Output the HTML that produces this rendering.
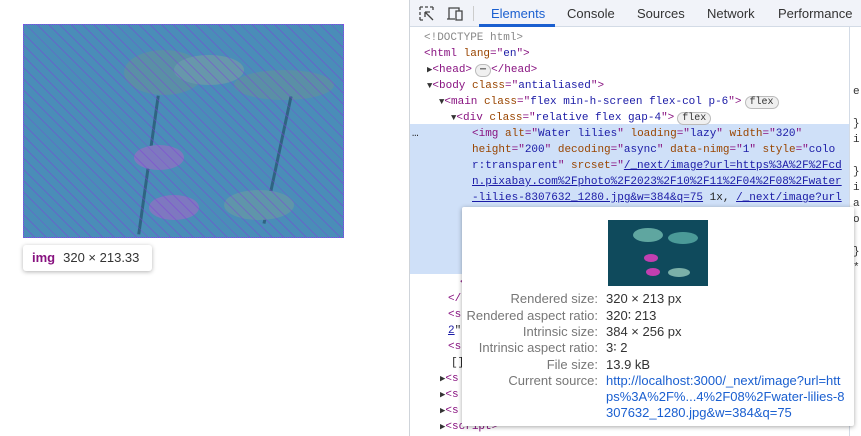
<!DOCTYPE html>
<html><head><style>
*{margin:0;padding:0;box-sizing:border-box}
body{width:861px;height:436px;overflow:hidden;background:#fff;font-family:"Liberation Sans",sans-serif;position:relative}
.img{position:absolute;left:23px;top:24px;width:321px;height:214px;background:#4a8db8;border:1px dotted #8a3ff0;overflow:hidden}
.stripes{position:absolute;inset:0;background:repeating-linear-gradient(45deg,transparent 0 7px,rgba(130,60,220,.45) 7px 8px)}
.tip{position:absolute;left:23px;top:245px;width:129px;height:26px;background:#fff;border-radius:3px;box-shadow:0 1px 4px rgba(0,0,0,.3);font-size:13px;line-height:26px;padding-left:9px;color:#333}
.tip b{color:#881280;margin-right:8px}
.dt{position:absolute;left:409px;top:0;width:452px;height:436px;border-left:1px solid #cfd4da;background:#fff;overflow:hidden}
.bar{height:27px;background:#f1f3f9;border-bottom:1px solid #d3dbe6;position:relative;font-size:13px;color:#333}
.bar span{position:absolute;top:6px}
.code{position:absolute;top:30px;left:0;width:440px;font-family:"Liberation Mono",monospace;font-size:11px;line-height:16px;color:#222}
.l{height:16px;white-space:pre;position:relative;overflow:hidden}
.t{color:#881280}.a{color:#994500}.v{color:#1a1aa6}.g{color:#888}.u{color:#1a1aa6;text-decoration:underline}
.hl{position:absolute;left:0;top:124px;width:440px;height:150px;background:#cfe0f8}
.badge{display:inline-block;border:1px solid #bbb;border-radius:8px;font-size:10px;line-height:11px;padding:0 4px;background:#f0f0f0;color:#333;margin-left:3px}
.side{position:absolute;left:439px;top:27px;width:13px;height:409px;border-left:1px solid #d3dbe6;font-family:"Liberation Mono",monospace;font-size:11px;color:#333;background:#fff}
.pop{position:absolute;left:462px;top:207px;width:392px;height:219px;background:#fff;box-shadow:0 1px 5px rgba(0,0,0,.35);border-radius:2px;font-size:13px;color:#333}
.pop .k{position:absolute;right:256px;text-align:right;color:#777;white-space:nowrap}
.pop .val{position:absolute;left:144px;white-space:nowrap}
.tri{font-size:9px;color:#333}
</style></head><body>
<div class="img">
<div style="position:absolute;left:100px;top:25px;width:80px;height:45px;border-radius:50%;background:#5a8fa6"></div>
<div style="position:absolute;left:150px;top:30px;width:70px;height:30px;border-radius:50%;background:#6797ab"></div>
<div style="position:absolute;left:210px;top:45px;width:100px;height:30px;border-radius:50%;background:#5a8fa6"></div>
<div style="position:absolute;left:123px;top:70px;width:3px;height:140px;background:#2f6482;transform:rotate(8deg)"></div>
<div style="position:absolute;left:252px;top:70px;width:3px;height:130px;background:#2f6482;transform:rotate(12deg)"></div>
<div style="position:absolute;left:110px;top:120px;width:50px;height:25px;border-radius:50%;background:#7e78c0"></div>
<div style="position:absolute;left:125px;top:170px;width:50px;height:25px;border-radius:50%;background:#7e78c0"></div>
<div style="position:absolute;left:200px;top:165px;width:70px;height:30px;border-radius:50%;background:#5f95aa"></div>
<div class="stripes"></div></div>
<div class="tip"><b>img</b>320 × 213.33</div>
<div class="dt">
<div class="bar">
<svg style="position:absolute;left:9px;top:6px" width="16" height="16" fill="none" stroke="#444" stroke-width="1.3"><path d="M1 1h3M6 1h3M11 1h3M1 1v3M1 6v3M1 11v3M1 14h3M14 1v3M6 6l8 8M6 6h5M6 6v5" /></svg>
<svg style="position:absolute;left:36px;top:6px" width="18" height="16" fill="none" stroke="#444" stroke-width="1.3"><path d="M3 13V2h10v3M1 13h8M10 5h6v9h-6z"/></svg>
<div style="position:absolute;left:63px;top:6px;width:1px;height:15px;background:#ccc"></div>
<span style="left:81px;color:#1a5fd0">Elements</span>
<div style="position:absolute;left:69px;top:24px;width:76px;height:3px;background:#1a5fd0"></div>
<span style="left:157px">Console</span>
<span style="left:227px">Sources</span>
<span style="left:297px">Network</span>
<span style="left:368px">Performance</span>
</div>
<div class="hl"></div>
<div class="code">
<div class="l" style="padding-left:14px"><span class="g">&lt;!DOCTYPE html&gt;</span></div>
<div class="l" style="padding-left:14px"><span class="t">&lt;html</span> <span class="a">lang</span><span class="t">="</span><span class="v">en</span><span class="t">"&gt;</span></div>
<div class="l" style="padding-left:17px"><span class="tri">▶</span><span class="t">&lt;head&gt;</span><span class="badge">⋯</span><span class="t">&lt;/head&gt;</span></div>
<div class="l" style="padding-left:17px"><span class="tri">▼</span><span class="t">&lt;body</span> <span class="a">class</span><span class="t">="</span><span class="v">antialiased</span><span class="t">"&gt;</span></div>
<div class="l" style="padding-left:29px"><span class="tri">▼</span><span class="t">&lt;main</span> <span class="a">class</span><span class="t">="</span><span class="v">flex min-h-screen flex-col p-6</span><span class="t">"&gt;</span><span class="badge">flex</span></div>
<div class="l" style="padding-left:41px"><span class="tri">▼</span><span class="t">&lt;div</span> <span class="a">class</span><span class="t">="</span><span class="v">relative flex gap-4</span><span class="t">"&gt;</span><span class="badge">flex</span></div>
<div class="l" style="padding-left:62px"><span style="position:absolute;left:2px">…</span><span class="t">&lt;img</span> <span class="a">alt</span><span class="t">="</span><span class="v">Water lilies</span><span class="t">"</span> <span class="a">loading</span><span class="t">="</span><span class="v">lazy</span><span class="t">"</span> <span class="a">width</span><span class="t">="</span><span class="v">320</span><span class="t">"</span></div>
<div class="l" style="padding-left:62px"><span class="a">height</span><span class="t">="</span><span class="v">200</span><span class="t">"</span> <span class="a">decoding</span><span class="t">="</span><span class="v">async</span><span class="t">"</span> <span class="a">data-nimg</span><span class="t">="</span><span class="v">1</span><span class="t">"</span> <span class="a">style</span><span class="t">="</span><span class="v">colo</span></div>
<div class="l" style="padding-left:62px"><span class="v">r:transparent</span><span class="t">"</span> <span class="a">srcset</span><span class="t">="</span><span class="u">/_next/image?url=https%3A%2F%2Fcd</span></div>
<div class="l" style="padding-left:62px"><span class="u">n.pixabay.com%2Fphoto%2F2023%2F10%2F11%2F04%2F08%2Fwater</span></div>
<div class="l" style="padding-left:62px"><span class="u">-lilies-8307632_1280.jpg&amp;w=384&amp;q=75</span> 1x, <span class="u">/_next/image?url</span></div>
<div class="l" style="padding-left:62px"><span class="u">=https%3A%2F%2Fcdn.pixabay.com%2Fphoto%2F2023%2F10%2F11%</span></div>
<div class="l"></div><div class="l"></div><div class="l"></div>
<div style="margin-top:5px"></div>
<div class="l" style="padding-left:50px"><span class="t">&lt;</span></div>
<div class="l" style="padding-left:38px"><span class="t">&lt;/</span></div>
<div class="l" style="padding-left:38px"><span class="t">&lt;s</span></div>
<div class="l" style="padding-left:38px"><span class="u">2</span>"</div>
<div class="l" style="padding-left:38px"><span class="t">&lt;s</span></div>
<div class="l" style="padding-left:41px">[]</div>
<div class="l" style="padding-left:30px"><span class="tri">▶</span><span class="t">&lt;s</span></div>
<div class="l" style="padding-left:30px"><span class="tri">▶</span><span class="t">&lt;s</span></div>
<div class="l" style="padding-left:30px"><span class="tri">▶</span><span class="t">&lt;s</span></div>
<div class="l" style="padding-left:30px"><span class="tri">▶</span><span class="t">&lt;script&gt;</span></div>
</div>
<div class="side"><div style="position:absolute;left:3px;top:57px;line-height:16px">e<br><br>}<br>i<br><br>}<br>i<br>a<br>o<br><br>}<br>*</div></div>
</div>
<div class="pop">
<div style="position:absolute;left:146px;top:13px;width:100px;height:66px;background:#0f4a5c;overflow:hidden">
<div style="position:absolute;left:25px;top:8px;width:30px;height:14px;border-radius:50%;background:#5fa6a0"></div>
<div style="position:absolute;left:60px;top:12px;width:30px;height:12px;border-radius:50%;background:#4b9a98"></div>
<div style="position:absolute;left:36px;top:34px;width:14px;height:8px;border-radius:50%;background:#c23fb0"></div>
<div style="position:absolute;left:38px;top:48px;width:14px;height:8px;border-radius:50%;background:#c23fb0"></div>
<div style="position:absolute;left:60px;top:48px;width:22px;height:9px;border-radius:50%;background:#7bb0a8"></div>
</div>
<div class="k" style="top:84px">Rendered size:</div><div class="val" style="top:84px">320 × 213 px</div>
<div class="k" style="top:101px">Rendered aspect ratio:</div><div class="val" style="top:101px">320∶ 213</div>
<div class="k" style="top:117px">Intrinsic size:</div><div class="val" style="top:117px">384 × 256 px</div>
<div class="k" style="top:133px">Intrinsic aspect ratio:</div><div class="val" style="top:133px">3∶ 2</div>
<div class="k" style="top:150px">File size:</div><div class="val" style="top:150px">13.9 kB</div>
<div class="k" style="top:166px">Current source:</div><div class="val" style="top:166px;color:#1a5fd0;line-height:16px">http://localhost:3000/_next/image?url=htt<br>ps%3A%2F%...4%2F08%2Fwater-lilies-8<br>307632_1280.jpg&amp;w=384&amp;q=75</div>
</div>
</body></html>
